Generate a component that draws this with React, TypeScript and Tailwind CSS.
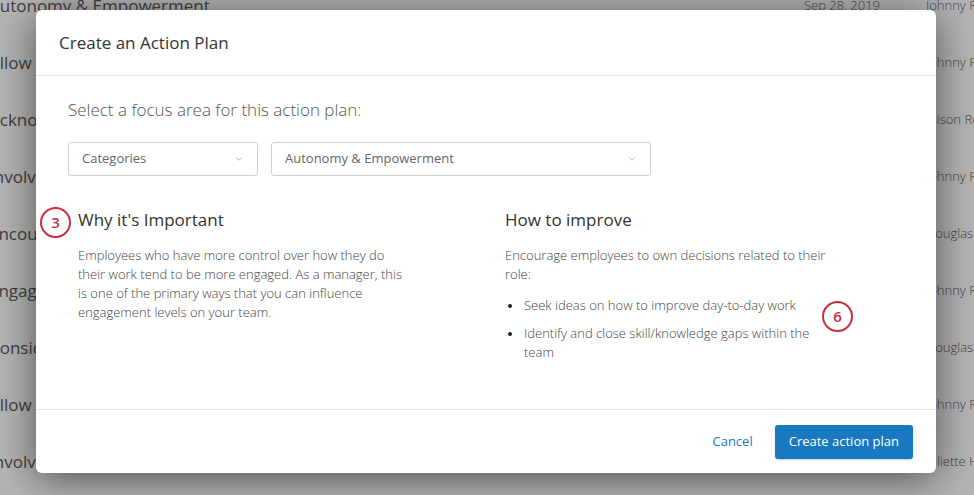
import { ChevronDown } from 'lucide-react';

const rows = [
  { left: 'Autonomy & Empowerment', date: 'Sep 28, 2019', name: 'Johnny Rivera' },
  { left: 'Allow employees to grow', date: 'Sep 28, 2019', name: 'Johnny Rivera' },
  { left: 'Acknowledge good work', date: 'Sep 27, 2019', name: 'Alison Reed' },
  { left: 'Involve employees in decisions', date: 'Sep 27, 2019', name: 'Johnny Rivera' },
  { left: 'Encourage feedback', date: 'Sep 26, 2019', name: 'Douglas Hart' },
  { left: 'Engagement check-ins', date: 'Sep 26, 2019', name: 'Johnny Rivera' },
  { left: 'Consider new ideas', date: 'Sep 25, 2019', name: 'Douglas Hart' },
  { left: 'Allow employees to grow', date: 'Sep 25, 2019', name: 'Johnny Rivera' },
  { left: 'Involve employees in decisions', date: 'Sep 24, 2019', name: 'Juliette Hale' },
];

const Badge = ({ n }: { n: number }) => (
  <div className="w-[31px] h-[31px] rounded-full border-[2.5px] border-[#c9303e] bg-white flex items-center justify-center text-[#c9303e] text-[15px] font-semibold leading-none">
    {n}
  </div>
);

const Select = ({ label, width }: { label: string; width: string }) => (
  <div className={`${width} h-[34px] border border-[#cfcfcf] rounded-[3px] flex items-center justify-between pl-[13px] pr-[13px] text-[13px] text-[#666]`}>
    <span>{label}</span>
    <ChevronDown className="w-[10px] h-[10px] text-[#888]" strokeWidth={1.5} />
  </div>
);

const Bullet = ({ children }: { children: React.ReactNode }) => (
  <li className="flex">
    <span className="w-[19px] shrink-0 flex items-center h-[19px] pl-[3px]">
      <span className="w-[4px] h-[4px] rounded-full bg-[#222]" />
    </span>
    <span>{children}</span>
  </li>
);

export default function App() {
  return (
    <div
      className="relative w-[974px] h-[495px] overflow-hidden bg-[#b4b4b4]"
      style={{ fontFamily: '"Open Sans", "Noto Sans", sans-serif' }}
    >
      {/* таблица под затемнением */}
      <div className="mt-[-23px] flex flex-col">
        {rows.map((r, i) => (
          <div key={i} className="h-[57px] flex items-center text-[#3f3f3f] whitespace-nowrap">
            <div className="w-[815px] shrink-0 ml-[-11px] text-[17px] overflow-hidden">{r.left}</div>
            <div className="w-[122px] shrink-0 text-[13px] font-light">{r.date}</div>
            <div className="shrink-0 text-[13px] font-light">{r.name}</div>
          </div>
        ))}
      </div>

      {/* модальное окно */}
      <div className="absolute left-[36px] top-[10px] w-[900px] h-[463px] bg-white rounded-[6px] shadow-[0_6px_40px_rgba(0,0,0,0.55)] flex flex-col">
        <div className="h-[66px] shrink-0 border-b border-[#e6e6e6] flex items-center px-[23px]">
          <h2 className="text-[17px] text-[#333]">Create an Action Plan</h2>
        </div>

        <div className="flex-1 px-[32px] pt-[22px] relative">
          <p className="text-[17px] leading-[24px] font-light text-[#555]">Select a focus area for this action plan:</p>
          <div className="mt-[20px] flex gap-[13px]">
            <Select label="Categories" width="w-[190px]" />
            <Select label="Autonomy & Empowerment" width="w-[380px]" />
          </div>

          <div className="mt-[32px] ml-[10px] flex">
            <div className="w-[427px]">
              <h3 className="text-[17px] leading-[24px] text-[#333]">Why it's Important</h3>
              <p className="mt-[14px] w-[334px] text-[13px] leading-[19px] font-light text-[#444]">
                Employees who have more control over how they do their work tend to be more engaged. As a manager, this is one of the primary ways that you can influence engagement levels on your team.
              </p>
            </div>
            <div className="w-[332px]">
              <h3 className="text-[17px] leading-[24px] text-[#333]">How to improve</h3>
              <p className="mt-[14px] text-[13px] leading-[19px] font-light text-[#444]">
                Encourage employees to own decisions related to their role:
              </p>
              <ul className="mt-[12px] flex flex-col gap-[9px] text-[13px] leading-[19px] font-light text-[#444]">
                <Bullet>Seek ideas on how to improve day-to-day work</Bullet>
                <Bullet>Identify and close skill/knowledge gaps within the team</Bullet>
              </ul>
            </div>
          </div>

          <div className="absolute left-[4px] top-[131px]">
            <Badge n={3} />
          </div>
          <div className="absolute left-[786px] top-[225px]">
            <Badge n={6} />
          </div>
        </div>

        <div className="h-[64px] shrink-0 border-t border-[#e6e6e6] flex items-center justify-end gap-[22px] px-[23px]">
          <button className="text-[13px] text-[#1a77bd]">Cancel</button>
          <button className="h-[34px] px-[14px] rounded-[3px] bg-[#1878c0] text-white text-[13px] shadow-[0_1px_2px_rgba(0,0,0,0.2)]">
            Create action plan
          </button>
        </div>
      </div>
    </div>
  );
}
